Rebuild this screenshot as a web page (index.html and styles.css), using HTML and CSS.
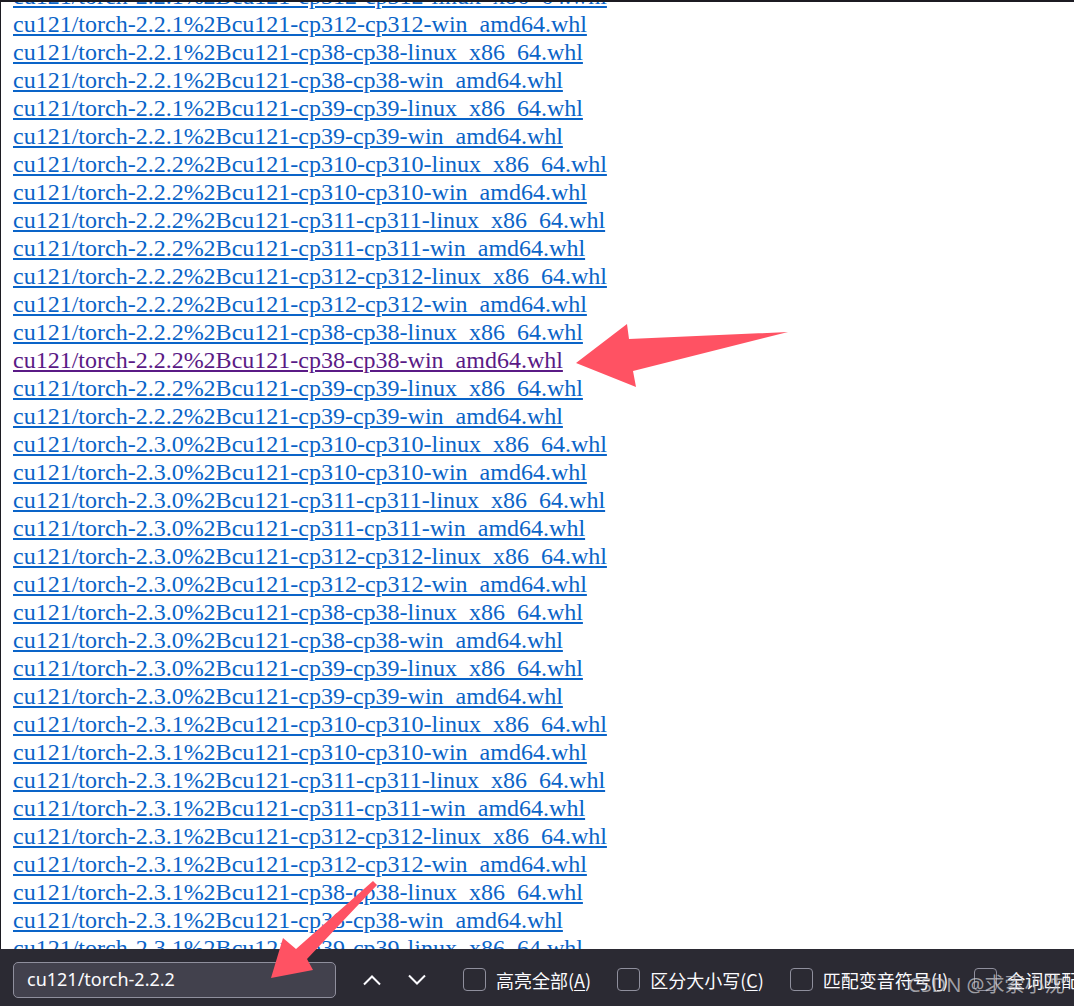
FILE: index.html
```html
<!DOCTYPE html>
<html lang="zh">
<head>
<meta charset="utf-8">
<title>torch wheels</title>
<link rel="stylesheet" href="styles.css">
</head>
<body>
<div class="window">
  <main class="page">
    <div class="list">
      <a href="#">cu121/torch-2.2.1%2Bcu121-cp312-cp312-linux_x86_64.whl</a>
      <a href="#">cu121/torch-2.2.1%2Bcu121-cp312-cp312-win_amd64.whl</a>
      <a href="#">cu121/torch-2.2.1%2Bcu121-cp38-cp38-linux_x86_64.whl</a>
      <a href="#">cu121/torch-2.2.1%2Bcu121-cp38-cp38-win_amd64.whl</a>
      <a href="#">cu121/torch-2.2.1%2Bcu121-cp39-cp39-linux_x86_64.whl</a>
      <a href="#">cu121/torch-2.2.1%2Bcu121-cp39-cp39-win_amd64.whl</a>
      <a href="#">cu121/torch-2.2.2%2Bcu121-cp310-cp310-linux_x86_64.whl</a>
      <a href="#">cu121/torch-2.2.2%2Bcu121-cp310-cp310-win_amd64.whl</a>
      <a href="#">cu121/torch-2.2.2%2Bcu121-cp311-cp311-linux_x86_64.whl</a>
      <a href="#">cu121/torch-2.2.2%2Bcu121-cp311-cp311-win_amd64.whl</a>
      <a href="#">cu121/torch-2.2.2%2Bcu121-cp312-cp312-linux_x86_64.whl</a>
      <a href="#">cu121/torch-2.2.2%2Bcu121-cp312-cp312-win_amd64.whl</a>
      <a href="#">cu121/torch-2.2.2%2Bcu121-cp38-cp38-linux_x86_64.whl</a>
      <a href="#" class="visited">cu121/torch-2.2.2%2Bcu121-cp38-cp38-win_amd64.whl</a>
      <a href="#">cu121/torch-2.2.2%2Bcu121-cp39-cp39-linux_x86_64.whl</a>
      <a href="#">cu121/torch-2.2.2%2Bcu121-cp39-cp39-win_amd64.whl</a>
      <a href="#">cu121/torch-2.3.0%2Bcu121-cp310-cp310-linux_x86_64.whl</a>
      <a href="#">cu121/torch-2.3.0%2Bcu121-cp310-cp310-win_amd64.whl</a>
      <a href="#">cu121/torch-2.3.0%2Bcu121-cp311-cp311-linux_x86_64.whl</a>
      <a href="#">cu121/torch-2.3.0%2Bcu121-cp311-cp311-win_amd64.whl</a>
      <a href="#">cu121/torch-2.3.0%2Bcu121-cp312-cp312-linux_x86_64.whl</a>
      <a href="#">cu121/torch-2.3.0%2Bcu121-cp312-cp312-win_amd64.whl</a>
      <a href="#">cu121/torch-2.3.0%2Bcu121-cp38-cp38-linux_x86_64.whl</a>
      <a href="#">cu121/torch-2.3.0%2Bcu121-cp38-cp38-win_amd64.whl</a>
      <a href="#">cu121/torch-2.3.0%2Bcu121-cp39-cp39-linux_x86_64.whl</a>
      <a href="#">cu121/torch-2.3.0%2Bcu121-cp39-cp39-win_amd64.whl</a>
      <a href="#">cu121/torch-2.3.1%2Bcu121-cp310-cp310-linux_x86_64.whl</a>
      <a href="#">cu121/torch-2.3.1%2Bcu121-cp310-cp310-win_amd64.whl</a>
      <a href="#">cu121/torch-2.3.1%2Bcu121-cp311-cp311-linux_x86_64.whl</a>
      <a href="#">cu121/torch-2.3.1%2Bcu121-cp311-cp311-win_amd64.whl</a>
      <a href="#">cu121/torch-2.3.1%2Bcu121-cp312-cp312-linux_x86_64.whl</a>
      <a href="#">cu121/torch-2.3.1%2Bcu121-cp312-cp312-win_amd64.whl</a>
      <a href="#">cu121/torch-2.3.1%2Bcu121-cp38-cp38-linux_x86_64.whl</a>
      <a href="#">cu121/torch-2.3.1%2Bcu121-cp38-cp38-win_amd64.whl</a>
      <a href="#">cu121/torch-2.3.1%2Bcu121-cp39-cp39-linux_x86_64.whl</a>
      <a href="#">cu121/torch-2.3.1%2Bcu121-cp39-cp39-win_amd64.whl</a>
    </div>
  </main>
  <div class="findbar">
    <div class="find-input">cu121/torch-2.2.2</div>
    <button class="nav-btn nav-up" type="button" aria-label="上一个">
      <svg width="20" height="12" viewBox="0 0 20 12"><path d="M2 10.5 L10 2.5 L18 10.5" fill="none" stroke="#fbfbfe" stroke-width="2"/></svg>
    </button>
    <button class="nav-btn nav-down" type="button" aria-label="下一个">
      <svg width="20" height="12" viewBox="0 0 20 12"><path d="M2 1.5 L10 9.5 L18 1.5" fill="none" stroke="#fbfbfe" stroke-width="2"/></svg>
    </button>
    <label class="opt"><span class="box"></span><span class="opt-text">高亮全部(<u>A</u>)</span></label>
    <label class="opt"><span class="box"></span><span class="opt-text">区分大小写(<u>C</u>)</span></label>
    <label class="opt"><span class="box"></span><span class="opt-text">匹配变音符号(<u>I</u>)</span></label>
    <label class="opt"><span class="box"></span><span class="opt-text">全词匹配(<u>W</u>)</span></label>
  </div>
</div>
<svg class="annot" width="1074" height="1006" viewBox="0 0 1074 1006">
  <polygon points="788,332 629,339 627,324 576,363 636,387 633,371" fill="#ff5263"/>
  <polygon points="373,881 377,885 307,959 313,970 271,978 283,938 296,949" fill="#ff5263"/>
</svg>
<div class="watermark">CSDN @求索小沈</div>
</body>
</html>
```
FILE: styles.css
```css
html, body {
  margin: 0;
  padding: 0;
}
body {
  background: #1c1b22;
  width: 1074px;
  height: 1006px;
  overflow: hidden;
  position: relative;
}
.window {
  display: flex;
  flex-direction: column;
  height: 1006px;
}
.page {
  flex: 1;
  margin-top: 2px;
  margin-left: 1px;
  background: #ffffff;
  overflow: hidden;
  padding-left: 12px;
}
.list {
  display: flex;
  flex-direction: column;
  align-items: flex-start;
  margin-top: -20px;
  font-family: "Liberation Serif", "Times New Roman", serif;
  font-size: 24px;
  line-height: 28px;
}
.list a {
  color: #0a64c8;
  text-decoration: underline;
  text-underline-offset: 2px;
  white-space: nowrap;
}
.list a.visited {
  color: #5a1a86;
}
.findbar {
  height: 57px;
  box-sizing: border-box;
  background: #2b2a33;
  display: flex;
  align-items: center;
  padding: 4px 0 0 13px;
  font-family: "Noto Sans", "Noto Sans CJK SC", sans-serif;
  color: #fbfbfe;
  white-space: nowrap;
}
.find-input {
  width: 323px;
  height: 36px;
  box-sizing: border-box;
  border: 1px solid #8f8f9d;
  border-radius: 5px;
  background: #42414d;
  padding-left: 13px;
  font-size: 18px;
  line-height: 33px;
  color: #fbfbfe;
  flex: none;
}
.nav-btn {
  width: 32px;
  height: 32px;
  padding: 0;
  border: 0;
  background: transparent;
  display: flex;
  align-items: center;
  justify-content: center;
  flex: none;
}
.nav-up {
  margin-left: 20px;
}
.nav-down {
  margin-left: 13px;
  margin-right: 30px;
}
.opt {
  display: flex;
  align-items: center;
  margin-right: 26px;
  flex: none;
}
.box {
  width: 23px;
  height: 23px;
  box-sizing: border-box;
  border: 1.5px solid #8f8f9d;
  border-radius: 4px;
  flex: none;
}
.opt-text {
  margin-left: 10px;
  font-family: "Noto Sans CJK SC", sans-serif;
  font-size: 18px;
  color: #fbfbfe;
}
.opt-text u {
  text-underline-offset: 2px;
}
.annot {
  position: absolute;
  left: 0;
  top: 0;
  pointer-events: none;
}
.watermark {
  position: absolute;
  left: 908px;
  top: 972px;
  font-family: "Noto Sans", "Noto Sans CJK SC", sans-serif;
  font-size: 20px;
  line-height: 26px;
  color: rgba(205, 205, 210, 0.72);
  white-space: nowrap;
  pointer-events: none;
}
```
